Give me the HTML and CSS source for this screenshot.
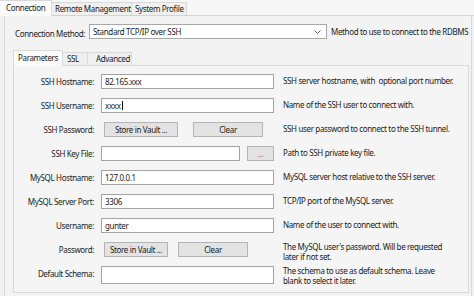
FILE: index.html
```html
<!DOCTYPE html>
<html>
<head>
<meta charset="utf-8">
<link rel="stylesheet" href="styles.css">
</head>
<body>
<div class="window">
  <div class="tabstrip outer-tabs">
    <div class="tab active t-conn">Connection</div>
    <div class="tab t-remote">Remote Management</div>
    <div class="tab t-profile">System Profile</div>
  </div>
  <div class="outer-panel">
    <div class="method-row">
      <div class="method-label">Connection Method:</div>
      <div class="select">
        <span class="select-text">Standard TCP/IP over SSH</span>
        <svg class="chev" width="7" height="4" viewBox="0 0 7 4"><polyline points="0.5,0.5 3.5,3.5 6.5,0.5" fill="none" stroke="#606060" stroke-width="1"/></svg>
      </div>
      <div class="method-desc">Method to use to connect to the RDBMS</div>
    </div>
    <div class="tabstrip inner-tabs">
      <div class="tab active t-params">Parameters</div>
      <div class="tab t-ssl">SSL</div>
      <div class="tab t-adv">Advanced</div>
    </div>
    <div class="inner-panel">
      <div class="form">
        <div class="lbl">SSH Hostname:</div>
        <div class="ctl"><div class="input">82.165.xxx</div></div>
        <div class="desc">SSH server hostname, with&nbsp; optional port number.</div>

        <div class="lbl">SSH Username:</div>
        <div class="ctl"><div class="input">xxxx<span class="caret"></span></div></div>
        <div class="desc">Name of the SSH user to connect with.</div>

        <div class="lbl">SSH Password:</div>
        <div class="ctl btns btns-ssh"><div class="btn store">Store in Vault ...</div><div class="btn clear">Clear</div></div>
        <div class="desc">SSH user password to connect to the SSH tunnel.</div>

        <div class="lbl">SSH Key File:</div>
        <div class="ctl keyfile"><div class="input key-input"></div><div class="btn dots">...</div></div>
        <div class="desc">Path to SSH private key file.</div>

        <div class="lbl">MySQL Hostname:</div>
        <div class="ctl"><div class="input">127.0.0.1</div></div>
        <div class="desc">MySQL server host relative to the SSH server.</div>

        <div class="lbl">MySQL Server Port:</div>
        <div class="ctl"><div class="input">3306</div></div>
        <div class="desc">TCP/IP port of the MySQL server.</div>

        <div class="lbl">Username:</div>
        <div class="ctl"><div class="input">gunter</div></div>
        <div class="desc">Name of the user to connect with.</div>

        <div class="lbl">Password:</div>
        <div class="ctl btns btns-mysql"><div class="btn store2">Store in Vault ...</div><div class="btn clear">Clear</div></div>
        <div class="desc two">The MySQL user's password. Will be requested<br>later if not set.</div>

        <div class="lbl">Default Schema:</div>
        <div class="ctl"><div class="input tall"></div></div>
        <div class="desc two">The schema to use as default schema. Leave<br>blank to select it later.</div>
      </div>
    </div>
  </div>
</div>
</body>
</html>
```
FILE: styles.css
```css
html, body {
  margin: 0;
  padding: 0;
}
body {
  width: 474px;
  height: 296px;
  overflow: hidden;
  background: #f0f0f0;
  font-family: "Noto Sans", "Open Sans", sans-serif;
  font-size: 8px;
  letter-spacing: -0.35px;
  color: #1a1a1a;
}
.window {
  position: relative;
  height: 296px;
}
.tabstrip {
  display: flex;
  align-items: flex-end;
  border-bottom: 1px solid #d4d4d4;
}
.outer-tabs {
  height: 15px;
  background: #f7f7f7;
}
.tab {
  box-sizing: border-box;
  height: 13px;
  line-height: 12px;
  padding: 0 0 0 3px;
  border: 1px solid #d9d9d9;
  border-bottom: none;
  margin-left: -1px;
  background: #f0f0f0;
  white-space: nowrap;
}
.tab.active {
  height: 16px;
  line-height: 14px;
  background: #fbfbfb;
  margin-bottom: -1px;
  position: relative;
  z-index: 1;
}
.t-conn { width: 52px; margin-left: 0; border-left: none; padding-left: 6px; }
.t-remote { width: 81px; }
.t-profile { width: 56px; }

.outer-panel {
  margin-left: 4px;
  margin-right: 2px;
  height: 280px;
  border-left: 1px solid #d9d9d9;
  border-right: 1px solid #d9d9d9;
  background: #f3f3f3;
}
.method-row {
  display: flex;
  align-items: center;
  padding-top: 8px;
  height: 15px;
}
.method-label {
  width: 84px;
  padding-left: 10px;
  box-sizing: border-box;
  padding-top: 3px;
  white-space: nowrap;
}
.select {
  box-sizing: border-box;
  width: 238px;
  height: 15px;
  border: 1px solid #a8a8a8;
  background: #fff;
  display: flex;
  align-items: center;
  justify-content: space-between;
  padding: 0 5px 0 3px;
}
.chev { display: block; }
.method-desc {
  margin-left: 4px;
  white-space: nowrap;
}

.inner-tabs {
  margin-top: 12px;
  margin-left: 8px;
  margin-right: 3px;
  height: 14px;
  border-bottom: none;
}
.t-params { width: 50px; margin-left: 0; padding-left: 4px; }
.t-ssl { width: 26px; padding-left: 4px; }
.t-adv { width: 45px; padding-left: 8px; }

.inner-panel {
  margin-left: 8px;
  margin-right: 2px;
  height: 228px;
  box-sizing: border-box;
  border: 1px solid #d9d9d9;
  background: #f5f5f5;
  padding-top: 8px;
}
.form {
  display: grid;
  grid-template-columns: 80px 180px 1fr;
  grid-template-rows: repeat(8, 15px) 18px;
  column-gap: 0;
  row-gap: 9px;
}
.lbl {
  text-align: right;
  padding-top: 2px;
  white-space: nowrap;
}
.ctl {
  margin-left: 7px;
  display: flex;
}
.input {
  box-sizing: border-box;
  flex: 1;
  height: 15px;
  border: 1px solid #a3a3a3;
  background: #fff;
  padding: 0 3px;
  line-height: 13px;
  white-space: nowrap;
}
.input.tall { height: 18px; }
.caret {
  display: inline-block;
  width: 0;
  height: 9px;
  margin-left: 1px;
  border-left: 1px solid #111;
  vertical-align: -1px;
}
.key-input { flex: 0 0 139px; }
.btn {
  box-sizing: border-box;
  height: 15px;
  line-height: 13px;
  border: 1px solid #b4b4b4;
  background: #e3e3e3;
  text-align: center;
  white-space: nowrap;
}
.dots { width: 27px; margin-left: 7px; color: #777; }
.btns { padding-left: 3px; }
.btns-ssh .store { width: 74px; }
.btns-ssh .clear { width: 70px; margin-left: 15px; }
.btns-mysql .store2 { width: 64px; }
.btns-mysql .clear { width: 70px; margin-left: 10px; }
.desc {
  margin-left: 9px;
  padding-top: 2px;
  white-space: nowrap;
  line-height: 10px;
}
.desc.two { padding-top: 0; }
```
